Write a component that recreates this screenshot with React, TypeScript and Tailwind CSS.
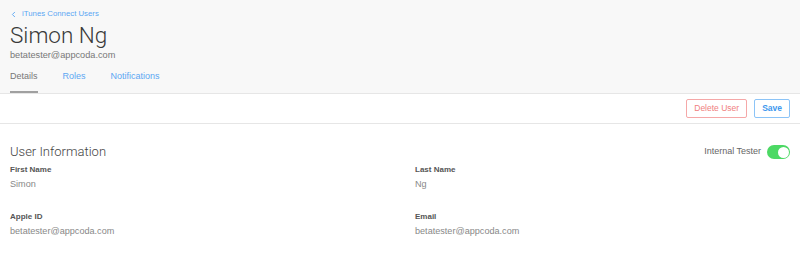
import { ChevronLeft } from 'lucide-react';

const font = { fontFamily: '"Liberation Sans", Arial, sans-serif' };
const light = { fontFamily: 'Roboto, "Liberation Sans", sans-serif', fontWeight: 300 };

function Field({ label, value }: { label: string; value: string }) {
  return (
    <div>
      <div className="text-[8px] font-bold text-[#555] leading-[10px]">{label}</div>
      <div className="text-[9.1px] text-[#888] leading-[12px] mt-[3px]">{value}</div>
    </div>
  );
}

export default function App() {
  return (
    <div className="w-[800px] h-[259px] bg-white overflow-hidden" style={font}>
      {/* Header */}
      <div className="bg-[#f8f8f8] border-b border-[#e6e6e6] px-[10px] pt-[8px]">
        <a className="flex items-center gap-[4px] text-[7.8px] text-[#5ca7f3] leading-[12px]">
          <ChevronLeft size={9} strokeWidth={2.5} className="-ml-[1px]" />
          iTunes Connect Users
        </a>
        <h1 className="text-[22.5px] text-[#3a3a3a] leading-[26px] mt-[2px]" style={light}>
          Simon Ng
        </h1>
        <div className="text-[9.2px] text-[#777] leading-[12px] mt-[1px]">betatester@appcoda.com</div>
        <div className="flex gap-[25px] mt-[9px] text-[9px] leading-[12px]">
          <span className="text-[#777] pb-[9px] border-b-2 border-[#a0a0a0]">Details</span>
          <span className="text-[#5ca7f3] pb-[9px]">Roles</span>
          <span className="text-[#5ca7f3] pb-[9px]">Notifications</span>
        </div>
      </div>

      {/* Toolbar */}
      <div className="flex justify-end gap-[7px] px-[10px] py-[5px] border-b border-[#e6e6e6]">
        <button className="h-[19px] px-[7px] border border-[#f5a8a8] rounded-[2px] text-[8.5px] text-[#f08080]">
          Delete User
        </button>
        <button className="h-[19px] px-[7px] border border-[#8cc4f7] rounded-[2px] text-[8.5px] font-bold text-[#3d98ee]">
          Save
        </button>
      </div>

      {/* User information */}
      <div className="px-[10px] pt-[20px]">
        <div className="flex items-center justify-between h-[16px]">
          <h2 className="text-[13px] text-[#444] leading-[16px]" style={light}>
            User Information
          </h2>
          <div className="flex items-center gap-[6px]">
            <span className="text-[9px] text-[#666]">Internal Tester</span>
            <div className="w-[23px] h-[14px] rounded-full bg-[#4cd964] flex items-center justify-end pr-[1.5px]">
              <div className="w-[11px] h-[11px] rounded-full bg-white" />
            </div>
          </div>
        </div>
        <div className="grid grid-cols-2 gap-y-[22px] mt-[5px] pr-[10px]">
          <Field label="First Name" value="Simon" />
          <div className="pl-[20px]"><Field label="Last Name" value="Ng" /></div>
          <Field label="Apple ID" value="betatester@appcoda.com" />
          <div className="pl-[20px]"><Field label="Email" value="betatester@appcoda.com" /></div>
        </div>
      </div>
    </div>
  );
}
